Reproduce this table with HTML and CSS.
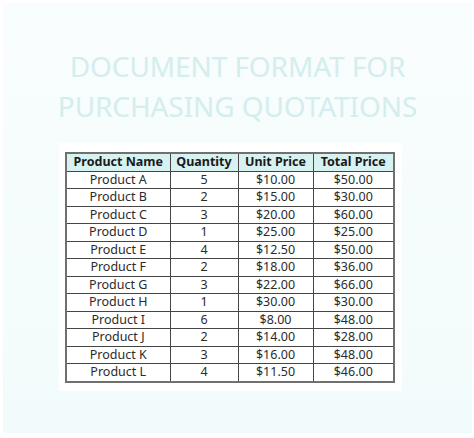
FILE: index.html
```html
<!DOCTYPE html>
<html>
<head>
<meta charset="utf-8">
<link rel="stylesheet" href="styles.css">
</head>
<body>
<div class="frame">
  <div class="panel">
    <h1 class="title">DOCUMENT FORMAT FOR<br>PURCHASING QUOTATIONS</h1>
    <div class="card">
      <table class="sheet">
        <colgroup><col class="c1"><col class="c2"><col class="c3"><col class="c4"></colgroup>
        <thead>
          <tr><th>Product Name</th><th>Quantity</th><th>Unit Price</th><th>Total Price</th></tr>
        </thead>
        <tbody>
          <tr><td>Product A</td><td>5</td><td>$10.00</td><td>$50.00</td></tr>
          <tr><td>Product B</td><td>2</td><td>$15.00</td><td>$30.00</td></tr>
          <tr><td>Product C</td><td>3</td><td>$20.00</td><td>$60.00</td></tr>
          <tr><td>Product D</td><td>1</td><td>$25.00</td><td>$25.00</td></tr>
          <tr><td>Product E</td><td>4</td><td>$12.50</td><td>$50.00</td></tr>
          <tr><td>Product F</td><td>2</td><td>$18.00</td><td>$36.00</td></tr>
          <tr><td>Product G</td><td>3</td><td>$22.00</td><td>$66.00</td></tr>
          <tr><td>Product H</td><td>1</td><td>$30.00</td><td>$30.00</td></tr>
          <tr><td>Product I</td><td>6</td><td>$8.00</td><td>$48.00</td></tr>
          <tr><td>Product J</td><td>2</td><td>$14.00</td><td>$28.00</td></tr>
          <tr><td>Product K</td><td>3</td><td>$16.00</td><td>$48.00</td></tr>
          <tr><td>Product L</td><td>4</td><td>$11.50</td><td>$46.00</td></tr>
        </tbody>
      </table>
    </div>
  </div>
</div>
</body>
</html>
```
FILE: styles.css
```css
html, body {
  margin: 0;
  padding: 0;
  background: #ffffff;
}
.frame {
  width: 474px;
  height: 438px;
  padding: 3px 2px 5px 3px;
  box-sizing: border-box;
}
.panel {
  height: 100%;
  background: linear-gradient(#f9fdfd, #f2fbfb);
  display: flex;
  flex-direction: column;
  align-items: flex-start;
}
.title {
  align-self: stretch;
  margin: 43px 0 0 0;
  font-family: "Noto Sans", "Open Sans", sans-serif;
  font-weight: 400;
  font-size: 28px;
  line-height: 40px;
  text-align: center;
  color: #d3eeee;
  letter-spacing: -0.1px;
}
.card {
  margin: 17px 0 0 56px;
  background: #ffffff;
  padding: 9px 7px 8px 6px;
}
.sheet {
  border-collapse: collapse;
  table-layout: fixed;
  width: 328px;
  border: 2px solid #707070;
  font-family: "Noto Sans", "Open Sans", sans-serif;
  font-size: 12.5px;
  color: #2b2b2b;
}
.sheet th, .sheet td {
  border: 1px solid #454545;
  padding: 0;
  height: 16.5px;
  line-height: 16px;
  text-align: center;
  white-space: nowrap;
}
.sheet th {
  background: #d8f1f1;
  font-weight: 700;
  color: #1a1a1a;
}
.c1 { width: 104px; }
.c2 { width: 68px; }
.c3 { width: 75px; }
.c4 { width: 81px; }
```
